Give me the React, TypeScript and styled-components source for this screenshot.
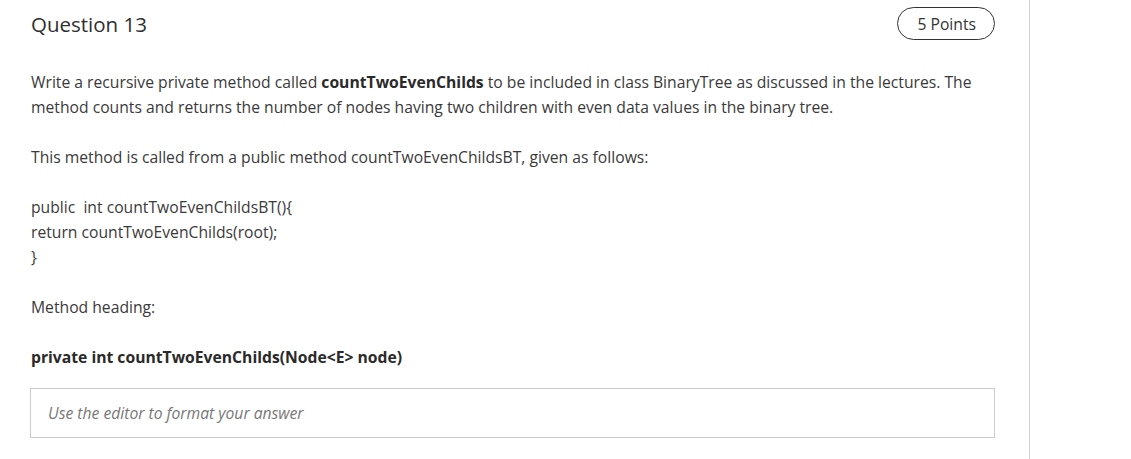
import React from "react";
import styled, { createGlobalStyle } from "styled-components";

const GlobalStyle = createGlobalStyle`
  html, body {
    margin: 0;
    padding: 0;
    background: #fff;
  }
  body {
    font-family: "Open Sans", "Liberation Sans", sans-serif;
    color: #333;
  }
`;

const Page = styled.div`
  display: flex;
  height: 459px;
  overflow: hidden;
`;

const Main = styled.div`
  width: 1030px;
  box-sizing: border-box;
  padding: 7px 34px 0 30px;
  border-right: 1px solid #cfcfcf;
`;

const Header = styled.div`
  display: flex;
  justify-content: space-between;
  align-items: center;
`;

const Title = styled.h2`
  margin: 0 0 0 1px;
  font-size: 20.5px;
  font-weight: 400;
  color: #2f2f2f;
`;

const PointsBadge = styled.div`
  box-sizing: border-box;
  height: 33px;
  padding: 0 18px 0 19px;
  display: flex;
  align-items: center;
  border: 1px solid #333;
  border-radius: 17px;
  font-size: 15.7px;
  color: #333;
`;

const Body = styled.div`
  margin-top: 30px;
  padding-left: 1px;
  font-size: 15.7px;
  line-height: 25px;
  color: #3a3a3a;

  & > p:last-child {
    margin-bottom: 18px;
  }
`;

const Para = styled.p<{ $bold?: boolean }>`
  margin: 0 0 25px;
  font-weight: ${(p) => (p.$bold ? 700 : 400)};
  color: ${(p) => (p.$bold ? "#2a2a2a" : "inherit")};
  white-space: pre-wrap;
`;

const Strong = styled.b`
  font-weight: 700;
  color: #2a2a2a;
`;

const AnswerBox = styled.div`
  box-sizing: border-box;
  height: 50px;
  border: 1px solid #cccccc;
  display: flex;
  align-items: center;
  padding-left: 17px;
  font-size: 15.7px;
  font-style: italic;
  color: #777;
`;

export default function App() {
  return (
    <>
      <GlobalStyle />
      <Page>
        <Main>
          <Header>
            <Title>Question 13</Title>
            <PointsBadge>5 Points</PointsBadge>
          </Header>
          <Body>
            <Para>
              Write a recursive private method called <Strong>countTwoEvenChilds</Strong> to be
              included in class BinaryTree as discussed in the lectures. The method counts and
              returns the number of nodes having two children with even data values in the binary
              tree.
            </Para>
            <Para>
              This method is called from a public method countTwoEvenChildsBT, given as follows:
            </Para>
            <Para>
              {"public  int countTwoEvenChildsBT(){\nreturn countTwoEvenChilds(root);\n}"}
            </Para>
            <Para>Method heading:</Para>
            <Para $bold>private int countTwoEvenChilds(Node&lt;E&gt; node)</Para>
          </Body>
          <AnswerBox>Use the editor to format your answer</AnswerBox>
        </Main>
      </Page>
    </>
  );
}
